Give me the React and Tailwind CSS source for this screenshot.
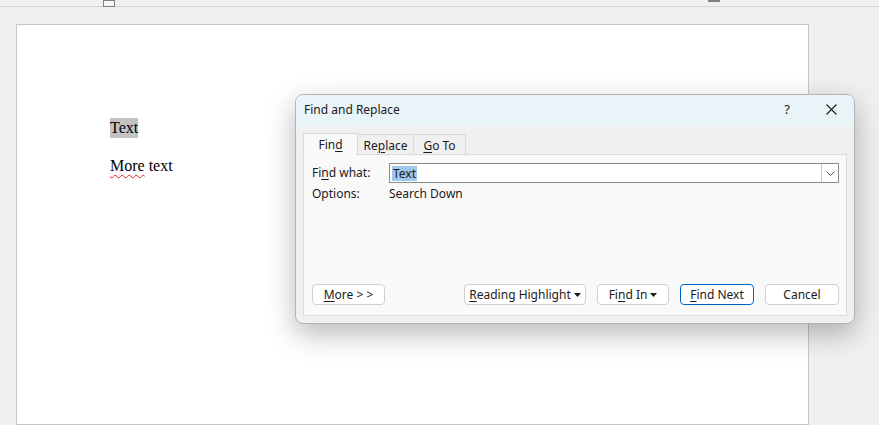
import React from "react";

const U = ({ children }) => <span className="underline underline-offset-[2px] decoration-[1px]">{children}</span>;

const Caret = () => (
  <svg width="7" height="4" viewBox="0 0 7 4" className="ml-[3px] mt-[1px]">
    <path d="M0 0h7L3.5 4z" fill="#1a1a1a" />
  </svg>
);

function Btn({ w, children, primary }) {
  return (
    <div
      className={`h-[21px] ${w} flex items-center justify-center rounded-[4px] bg-white border ${
        primary ? "border-[#0067c0]" : "border-[#d0d0d0]"
      }`}
    >
      {children}
    </div>
  );
}

export default function App() {
  return (
    <div className="relative w-[879px] h-[425px] overflow-hidden bg-[#f0f0f0] flex flex-col" style={{ fontFamily: '"Noto Sans", "Open Sans", sans-serif' }}>
      {/* ruler strip */}
      <div className="h-[7px] border-b border-[#d2d2d2] flex items-start shrink-0">
        <div className="ml-[103px] w-[12px] h-[7px] border border-[#7f7f7f] bg-[#f6f6f6]" />
        <div className="ml-[593px] w-[12px] h-[2px] bg-[#808080]" />
      </div>
      <div className="h-[17px] shrink-0" />
      {/* document page */}
      <div className="ml-[16px] w-[793px] flex-1 bg-white border border-[#c6c6c6] pl-[93px] pt-[93px]" style={{ fontFamily: '"Liberation Serif", serif' }}>
        <div className="text-[16px] leading-[20px] text-black">
          <span className="bg-[#c3c3c3] inline-block h-[20px]">Text</span>
        </div>
        <div className="mt-[18px] text-[16px] leading-[20px] text-black">
          <span className="underline decoration-wavy decoration-[#e02020] decoration-[1px] underline-offset-[3px]">More</span> text
        </div>
      </div>

      {/* Find and Replace dialog */}
      <div className="absolute left-[295px] top-[94px] w-[560px] h-[230px] rounded-[8px] border border-[#b4b4b4] bg-[#f0f0f0] overflow-hidden flex flex-col shadow-[0_10px_28px_rgba(0,0,0,0.28)] text-[12px] text-[#1a1a1a]">
        <div className="h-[31px] shrink-0 bg-[#e8f4f7] flex items-center pl-[8px] pb-[2px]">
          <span>Find and Replace</span>
          <span className="ml-auto mr-[36px] text-[13px]">?</span>
          <svg width="11" height="11" viewBox="0 0 11 11" className="mr-[17px]">
            <path d="M0.5 0.5L10.5 10.5M10.5 0.5L0.5 10.5" stroke="#1a1a1a" strokeWidth="1.1" />
          </svg>
        </div>
        <div className="flex-1 flex flex-col px-[7px] pb-[7px] pt-[8px]">
          {/* tabs */}
          <div className="flex items-end h-[21px] relative z-10 -mb-px">
            <div className="w-[55px] h-[22px] bg-[#f9f9f9] border border-b-0 border-[#d9d9d9] flex items-center justify-center pt-[1px]">
              <span>Fin<U>d</U></span>
            </div>
            <div className="w-[56px] h-[21px] border border-l-0 border-b-0 border-[#d9d9d9] flex items-center justify-center pt-[1px]">
              <span>Re<U>p</U>lace</span>
            </div>
            <div className="w-[52px] h-[21px] border border-l-0 border-b-0 border-[#d9d9d9] flex items-center justify-center pt-[1px]">
              <span><U>G</U>o To</span>
            </div>
          </div>
          <div className="flex-1 bg-[#f9f9f9] border border-[#dcdcdc] flex flex-col pl-[8px] pr-[7px] pt-[8px] pb-[10px]">
            <div className="flex items-center h-[20px]">
              <span className="w-[77px]">Fi<U>n</U>d what:</span>
              <div className="flex-1 h-[20px] bg-white border border-[#8a8a8a] flex items-center pl-[2px]">
                <span className="bg-[#9fc7ec] leading-[15px] px-px">Text</span>
                <div className="ml-auto h-[18px] w-[17px] border-l border-[#c8c8c8] flex items-center justify-center">
                  <svg width="9" height="5" viewBox="0 0 9 5">
                    <path d="M0.5 0.5L4.5 4.5L8.5 0.5" stroke="#555" strokeWidth="1" fill="none" />
                  </svg>
                </div>
              </div>
            </div>
            <div className="flex items-center h-[21px] pt-px">
              <span className="w-[77px]">Options:</span>
              <span>Search Down</span>
            </div>
            <div className="mt-auto flex items-center">
              <Btn w="w-[73px]"><span><U>M</U>ore &gt; &gt;</span></Btn>
              <div className="ml-auto flex gap-[11px]">
                <Btn w="w-[122px]"><span><U>R</U>eading Highlight</span><Caret /></Btn>
                <Btn w="w-[72px]"><span>Fi<U>n</U>d In</span><Caret /></Btn>
                <Btn w="w-[74px]" primary><span><U>F</U>ind Next</span></Btn>
                <Btn w="w-[74px]"><span>Cancel</span></Btn>
              </div>
            </div>
          </div>
        </div>
      </div>
    </div>
  );
}
